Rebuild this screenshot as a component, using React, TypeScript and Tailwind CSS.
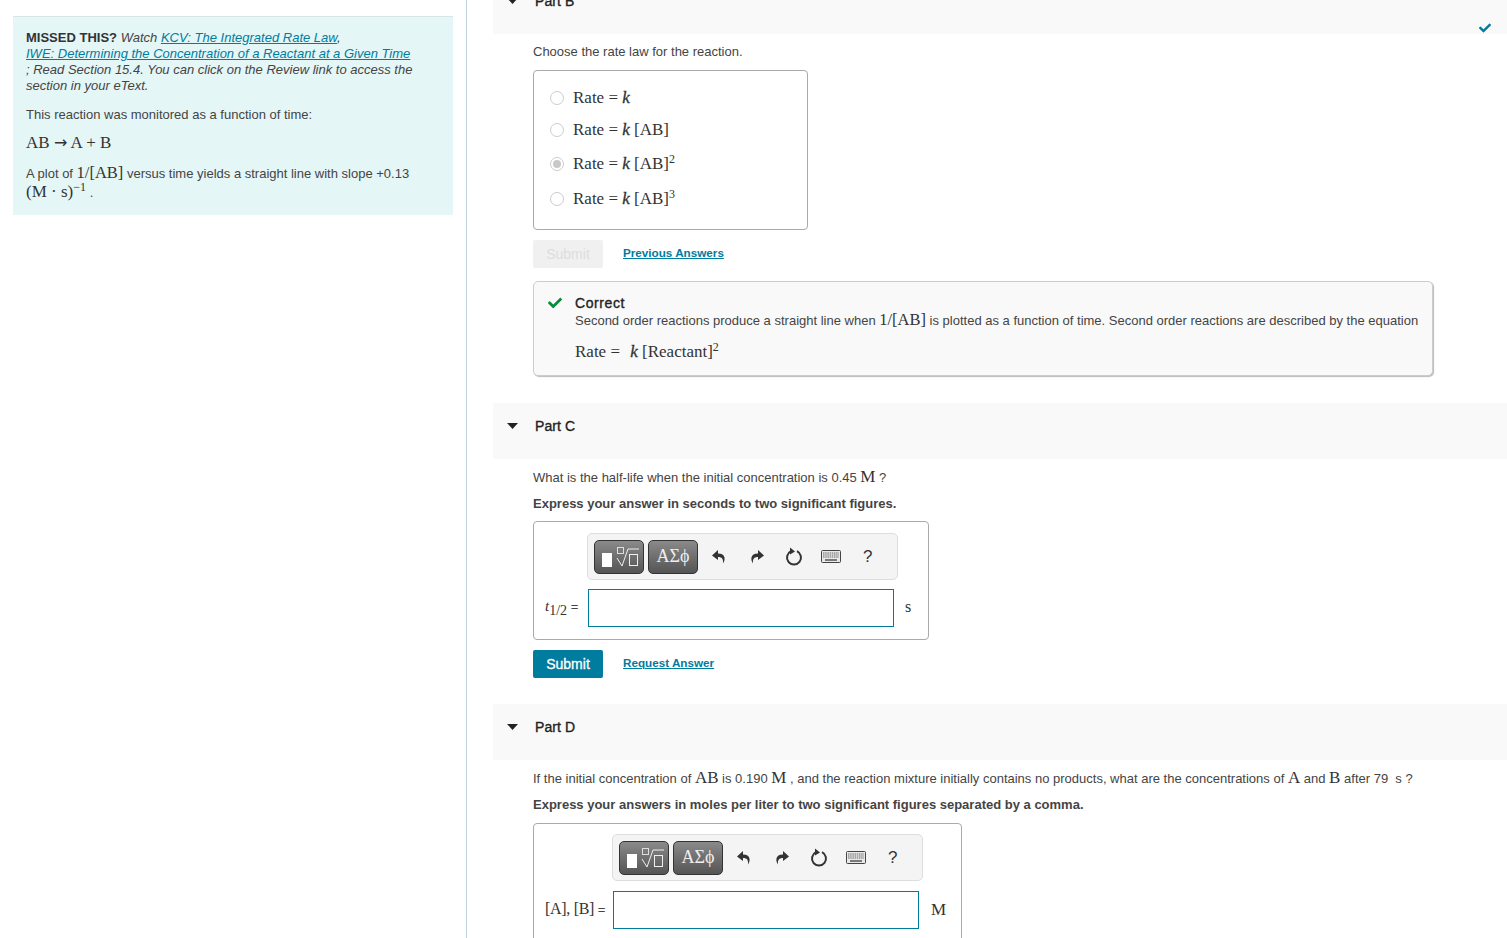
import type { ReactNode } from 'react'
import { FaCheck } from 'react-icons/fa'

const LINK = 'text-[#007c9e] underline'

function M({ children, className = 'text-[17px]' }: { children: ReactNode; className?: string }) {
  return <span className={`font-['Liberation_Serif',serif] text-[#333] ${className}`}>{children}</span>
}

function K() {
  return <i className="font-['Liberation_Serif',serif] [-webkit-text-stroke:0.3px_#333]">k</i>
}

function Sup({ children }: { children: ReactNode }) {
  return <sup className="relative top-[-6px] align-baseline text-[12px] leading-none">{children}</sup>
}

function PartHeader({ label }: { label: string }) {
  return (
    <div className="flex h-14 items-start bg-[#f9f9f9] pl-[14px] pt-[13px]">
      <svg width="11" height="6" viewBox="0 0 11 6" className="mr-[17px] mt-[7px]">
        <path d="M0 0h11L5.5 6z" fill="#222" />
      </svg>
      <span className="text-[14px] leading-5 tracking-[0.1px] text-[#222] [-webkit-text-stroke:0.35px_#222]">{label}</span>
    </div>
  )
}

function Radio({ checked }: { checked?: boolean }) {
  return (
    <span className="flex h-[14px] w-[14px] items-center justify-center rounded-full border border-[#ccc] bg-white">
      {checked && <span className="h-2 w-2 rounded-full bg-[#c8c8c8]" />}
    </span>
  )
}

function RadioRow({ checked, height, children }: { checked?: boolean; height: string; children: ReactNode }) {
  return (
    <div className={`flex items-center gap-[9px] pl-4 ${height}`}>
      <Radio checked={checked} />
      <M>{children}</M>
    </div>
  )
}

function UndoIcon({ className = '' }: { className?: string }) {
  return (
    <svg width="14" height="16" viewBox="0 0 14 16" className={className}>
      <path d="M6 1L0 6.5 6 11V8c4 0 5.5 2 5 6.5 2.5-3.5 3-10-5-10z" fill="#333" />
    </svg>
  )
}

function Toolbar() {
  return (
    <div className="flex h-[47px] w-[311px] items-center rounded-[5px] border border-[#ddd] bg-[#f4f4f4] pl-[6px]">
      <div className="flex h-[34px] w-[50px] items-center justify-center rounded-[5px] border border-[#333] bg-gradient-to-b from-[#8a8a8a] to-[#555]">
        <svg width="42" height="26" viewBox="0 0 42 26" fill="none">
          <rect x="4" y="9" width="10" height="14" fill="#fff" />
          <rect x="19.5" y="3.5" width="6" height="6" stroke="#ddd" />
          <path d="M19 14l5 8 6-17h11" stroke="#eee" />
          <rect x="31.5" y="10.5" width="8" height="11" stroke="#eee" />
        </svg>
      </div>
      <div className="ml-1 flex h-[34px] w-[50px] items-center justify-center rounded-[5px] border border-[#333] bg-gradient-to-b from-[#8a8a8a] to-[#555] pb-[2px] font-['Liberation_Serif',serif] text-[18px] leading-none text-[#eee]">
        ΑΣϕ
      </div>
      <UndoIcon className="ml-[14px]" />
      <UndoIcon className="ml-[24px] -scale-x-100" />
      <svg width="18" height="20" viewBox="0 0 18 20" fill="none" className="ml-[21px]">
        <path d="M6 4.2a7 7 0 1 0 6 0" stroke="#333" strokeWidth="2" />
        <path d="M5 0.5l5 4-5 3z" fill="#333" />
      </svg>
      <svg width="20" height="13" viewBox="0 0 20 13" fill="none" className="ml-[18px]">
        <rect x="0.5" y="0.5" width="19" height="12" rx="1" stroke="#444" fill="#e8e8e8" />
        <path d="M2 3h16M2 5h16M2 7h16" stroke="#666" strokeDasharray="1.5 0.7" />
        <path d="M4 10h12" stroke="#555" strokeWidth="1.5" />
      </svg>
      <span className="ml-[22px] text-[17px] leading-none text-[#333]">?</span>
    </div>
  )
}

function AnswerInput() {
  return <div className="h-[38px] w-[306px] border border-[#007c9e] bg-white" />
}

export default function App() {
  return (
    <div className="flex h-[938px] overflow-hidden bg-white font-['Liberation_Sans',Arial,sans-serif] text-[13px] text-[#444]">
      <aside className="h-full w-[467px] shrink-0 border-r border-[#c3d4e3] px-[13px] pt-4">
        <div className="h-[199px] w-[440px] border-t border-[#d9e4e8] bg-[#e5f6f7] px-[13px] pt-[13px]">
          <p className="leading-4">
            <b className="font-bold text-[#333]">MISSED THIS?</b> <i>Watch</i>{' '}
            <i className={LINK}>KCV: The Integrated Rate Law</i>
            <i>,</i>
            <br />
            <i className={LINK}>IWE: Determining the Concentration of a Reactant at a Given Time</i>
            <br />
            <i>; Read Section 15.4. You can click on the Review link to access the section in your eText.</i>
          </p>
          <p className="mt-[13px] leading-4">This reaction was monitored as a function of time:</p>
          <p className="mt-[10px] leading-5">
            <M>
              AB <span className="font-['DejaVu_Sans',sans-serif] text-[16px]">→</span> A + B
            </M>
          </p>
          <p className="mt-[10px] leading-[18px]">
            A plot of <M className="text-[16.5px]">1/[AB]</M> versus time yields a straight line with slope +0.13
            <br />
            <M>
              (M · s)<Sup>−1</Sup>
            </M>{' '}
            .
          </p>
        </div>
      </aside>

      <main className="relative min-w-0 flex-1 pl-[26px]">
        <div className="-mt-[22px]">
          <PartHeader label="Part B" />
        </div>
        <FaCheck className="absolute right-[16px] top-[22px] text-[12px] text-[#007c9e]" />

        <div className="pl-10">
          <p className="mt-[10px] leading-4">Choose the rate law for the reaction.</p>
          <div className="mt-[10px] h-40 w-[275px] rounded-[4px] border border-[#aaa] pt-[11px]">
            <RadioRow height="h-8">
              Rate = <K />
            </RadioRow>
            <RadioRow height="h-8">
              Rate = <K /> [AB]
            </RadioRow>
            <RadioRow height="h-9" checked>
              Rate = <K /> [AB]<Sup>2</Sup>
            </RadioRow>
            <RadioRow height="h-[34px]">
              Rate = <K /> [AB]<Sup>3</Sup>
            </RadioRow>
          </div>
          <div className="mt-[10px] flex items-center gap-5">
            <span className="flex h-7 w-[70px] items-center justify-center rounded-[2px] bg-[#f0f0f0] text-[14px] text-[#ddd]">
              Submit
            </span>
            <a className={`pb-[2px] text-[11.7px] font-bold ${LINK}`}>Previous Answers</a>
          </div>

          <div className="mt-[13px] flex h-[95px] w-[900px] rounded-[5px] border border-[#ccc] bg-[#f9f9f9] pl-[14px] pt-[13px] shadow-[1px_1px_1px_#bbb]">
            <FaCheck className="mt-[1px] shrink-0 text-[14px] text-[#0a8a3c]" />
            <div className="ml-[13px]">
              <p className="text-[14px] leading-4 tracking-[0.6px] text-[#222] [-webkit-text-stroke:0.35px_#222]">Correct</p>
              <p className="whitespace-nowrap leading-[18px]">
                Second order reactions produce a straight line when <M className="text-[16.5px]">1/[AB]</M> is plotted as
                a function of time. Second order reactions are described by the equation
              </p>
              <p className="mt-[9px]">
                <M>
                  Rate = <span className="ml-[6px]"><K /></span> [Reactant]<Sup>2</Sup>
                </M>
              </p>
            </div>
          </div>
        </div>

        <div className="mt-[27px]">
          <PartHeader label="Part C" />
        </div>
        <div className="pl-10">
          <p className="mt-[9px] h-[18px] leading-[18px]">
            What is the half-life when the initial concentration is 0.45 <M>M</M> ?
          </p>
          <p className="mt-[10px] font-bold leading-4">Express your answer in seconds to two significant figures.</p>
          <div className="mt-[9px] h-[119px] w-[396px] rounded-[4px] border border-[#aaa] pt-[11px]">
            <div className="ml-[53px]">
              <Toolbar />
            </div>
            <div className="mt-[9px] flex items-center">
              <span className="mb-[3px] ml-[11px] w-[43px] whitespace-nowrap">
                <M className="text-[15px]">
                  <i>t</i>
                  <sub className="text-[14px]">1/2</sub>
                </M>{' '}
                =
              </span>
              <AnswerInput />
              <M className="mb-[2px] ml-[11px] text-[16px]">s</M>
            </div>
          </div>
          <div className="mt-[10px] flex items-center gap-5">
            <span className="flex h-7 w-[70px] items-center justify-center rounded-[2px] bg-[#007c9e] text-[14px] text-white [-webkit-text-stroke:0.3px_#fff]">
              Submit
            </span>
            <a className={`pb-[2px] text-[11.7px] font-bold ${LINK}`}>Request Answer</a>
          </div>
        </div>

        <div className="mt-[26px]">
          <PartHeader label="Part D" />
        </div>
        <div className="pl-10">
          <p className="mt-[9px] h-[18px] whitespace-nowrap leading-[18px]">
            If the initial concentration of <M>AB</M> is 0.190 <M>M</M> , and the reaction mixture initially contains no
            products, what are the concentrations of <M>A</M> and <M>B</M> after 79 &nbsp;s ?
          </p>
          <p className="mt-[10px] font-bold leading-4">
            Express your answers in moles per liter to two significant figures separated by a comma.
          </p>
          <div className="mt-[10px] h-[140px] w-[429px] rounded-[4px] border border-[#aaa] pt-[10px]">
            <div className="ml-[78px]">
              <Toolbar />
            </div>
            <div className="mt-[10px] flex items-center">
              <span className="mb-[2px] ml-[11px] w-[68px] whitespace-nowrap">
                <M className="text-[16px] tracking-[-0.3px]">[A], [B]</M> =
              </span>
              <AnswerInput />
              <M className="mb-[1px] ml-3 text-[17px]">M</M>
            </div>
          </div>
        </div>
      </main>
    </div>
  )
}
